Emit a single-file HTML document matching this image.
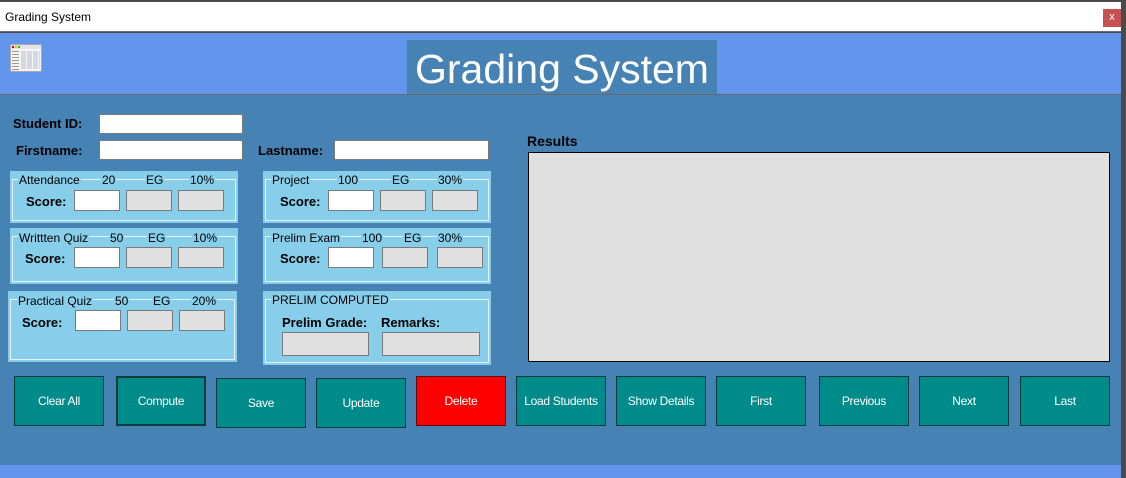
<!DOCTYPE html><html><head><style>
*{margin:0;padding:0;box-sizing:border-box}
body{width:1126px;height:478px;position:relative;overflow:hidden;background:#4a4a4a;font-family:"Liberation Sans",sans-serif}
.a{position:absolute}
.lbl{position:absolute;font-weight:bold;font-size:13px;color:#000;white-space:nowrap}
.in{position:absolute;background:#fff;border:1px solid #7a7a7a}
.g{position:absolute;background:#e0e0e0;border:1px solid #7a7a7a}
.grp{position:absolute;background:#87ceeb}
.fs{position:absolute;left:2px;right:2px;top:8px;bottom:2px;border:1px solid #e6f2f8}
.t{position:absolute;font-size:12px;color:#000;background:#87ceeb;padding:0 1px;white-space:nowrap}
.btn{position:absolute;width:90px;height:50px;background:#008b8b;border:1px solid #0b3b3b;color:#fff;font-size:12px;display:flex;align-items:center;justify-content:center;letter-spacing:-0.3px;white-space:nowrap}
</style></head><body>
<div class="a" style="left:0;top:2px;width:1121px;height:30px;background:#fff;border-bottom:1px solid #6a6a6a"></div>
<div class="a" style="left:5px;top:10px;font-size:12px">Grading System</div>
<div class="a" style="left:1103px;top:9px;width:18px;height:18px;background:#c75050;color:#fff;font-size:11px;text-align:center;line-height:17px">x</div>
<div class="a" style="left:0;top:33px;width:1121px;height:62px;background:#6495ed;border-bottom:1px solid #6a6a6a"></div>
<div class="a" style="left:407px;top:40px;width:310px;height:54px;background:#4682b4;color:#fff;font-size:41px;text-align:center;line-height:58px;white-space:nowrap">Grading System</div>
<div class="a" style="left:10px;top:44px;width:32px;height:28px;background:#f4f4f4;border:1px solid #aaa;border-radius:2px"></div>
<div class="a" style="left:11px;top:45px;width:30px;height:4px;background:#e4e4e4"></div>
<div class="a" style="left:12px;top:46px;width:2px;height:2px;background:#c00"></div>
<div class="a" style="left:15px;top:46px;width:2px;height:2px;background:#db0"></div>
<div class="a" style="left:18px;top:46px;width:2px;height:2px;background:#3a3"></div>
<div class="a" style="left:12px;top:51px;width:7px;height:19px;background:repeating-linear-gradient(180deg,#999 0 1px,transparent 1px 3px)"></div>
<div class="a" style="left:21px;top:51px;width:19px;height:18px;background:repeating-linear-gradient(90deg,#d4d8e0 0 5px,transparent 5px 6px)"></div>
<div class="a" style="left:0;top:95px;width:1121px;height:370px;background:#4682b4"></div>
<div class="a" style="left:0;top:465px;width:1121px;height:13px;background:#6495ed"></div>

<div class="lbl" style="left:13px;top:116px">Student ID:</div>
<div class="in" style="left:99px;top:114px;width:144px;height:20px"></div>
<div class="lbl" style="left:16px;top:143px">Firstname:</div>
<div class="in" style="left:99px;top:140px;width:144px;height:20px"></div>
<div class="lbl" style="left:258px;top:143px">Lastname:</div>
<div class="in" style="left:334px;top:140px;width:155px;height:20px"></div>

<div class="grp" style="left:10px;top:171px;width:228px;height:52px"><div class="fs"></div>
<span class="t" style="left:8px;top:2px">Attendance</span><span class="t" style="left:91px;top:2px">20</span><span class="t" style="left:135px;top:2px">EG</span><span class="t" style="left:179px;top:2px">10%</span>
<div class="lbl" style="left:16px;top:23px">Score:</div></div>
<div class="in" style="left:74px;top:190px;width:46px;height:21px"></div><div class="g" style="left:126px;top:190px;width:46px;height:21px"></div><div class="g" style="left:178px;top:190px;width:46px;height:21px"></div>

<div class="grp" style="left:10px;top:228px;width:228px;height:56px"><div class="fs"></div>
<span class="t" style="left:8px;top:3px">Writtten Quiz</span><span class="t" style="left:99px;top:3px">50</span><span class="t" style="left:137px;top:3px">EG</span><span class="t" style="left:182px;top:3px">10%</span>
<div class="lbl" style="left:15px;top:23px">Score:</div></div>
<div class="in" style="left:74px;top:247px;width:46px;height:21px"></div><div class="g" style="left:126px;top:247px;width:46px;height:21px"></div><div class="g" style="left:178px;top:247px;width:46px;height:21px"></div>

<div class="grp" style="left:8px;top:291px;width:229px;height:71px"><div class="fs"></div>
<span class="t" style="left:9px;top:3px">Practical Quiz</span><span class="t" style="left:106px;top:3px">50</span><span class="t" style="left:144px;top:3px">EG</span><span class="t" style="left:183px;top:3px">20%</span>
<div class="lbl" style="left:14px;top:24px">Score:</div></div>
<div class="in" style="left:75px;top:310px;width:46px;height:21px"></div><div class="g" style="left:127px;top:310px;width:46px;height:21px"></div><div class="g" style="left:179px;top:310px;width:46px;height:21px"></div>

<div class="grp" style="left:263px;top:171px;width:228px;height:52px"><div class="fs"></div>
<span class="t" style="left:8px;top:2px">Project</span><span class="t" style="left:74px;top:2px">100</span><span class="t" style="left:128px;top:2px">EG</span><span class="t" style="left:174px;top:2px">30%</span>
<div class="lbl" style="left:17px;top:23px">Score:</div></div>
<div class="in" style="left:328px;top:190px;width:46px;height:21px"></div><div class="g" style="left:380px;top:190px;width:46px;height:21px"></div><div class="g" style="left:432px;top:190px;width:46px;height:21px"></div>

<div class="grp" style="left:263px;top:228px;width:228px;height:56px"><div class="fs"></div>
<span class="t" style="left:8px;top:3px">Prelim Exam</span><span class="t" style="left:98px;top:3px">100</span><span class="t" style="left:140px;top:3px">EG</span><span class="t" style="left:174px;top:3px">30%</span>
<div class="lbl" style="left:17px;top:23px">Score:</div></div>
<div class="in" style="left:328px;top:247px;width:46px;height:21px"></div><div class="g" style="left:382px;top:247px;width:46px;height:21px"></div><div class="g" style="left:437px;top:247px;width:46px;height:21px"></div>

<div class="grp" style="left:263px;top:291px;width:228px;height:74px"><div class="fs"></div>
<span class="t" style="left:8px;top:2px">PRELIM COMPUTED</span>
<div class="lbl" style="left:19px;top:24px">Prelim Grade:</div><div class="lbl" style="left:118px;top:24px">Remarks:</div></div>
<div class="g" style="left:282px;top:332px;width:87px;height:24px"></div><div class="g" style="left:382px;top:332px;width:98px;height:24px"></div>

<div class="lbl" style="left:527px;top:133px;font-size:14px">Results</div>
<div class="a" style="left:528px;top:152px;width:582px;height:210px;background:#e0e0e0;border:1px solid #000"></div>

<div class="btn" style="left:14px;top:376px">Clear All</div>
<div class="btn" style="left:116px;top:376px;border:2px solid #0b3b3b">Compute</div>
<div class="btn" style="left:216px;top:378px">Save</div>
<div class="btn" style="left:316px;top:378px">Update</div>
<div class="btn" style="left:416px;top:376px;background:#ff0000;border-color:#6a0a0a">Delete</div>
<div class="btn" style="left:516px;top:376px">Load Students</div>
<div class="btn" style="left:616px;top:376px">Show Details</div>
<div class="btn" style="left:716px;top:376px">First</div>
<div class="btn" style="left:819px;top:376px">Previous</div>
<div class="btn" style="left:919px;top:376px">Next</div>
<div class="btn" style="left:1020px;top:376px">Last</div>
</body></html>
